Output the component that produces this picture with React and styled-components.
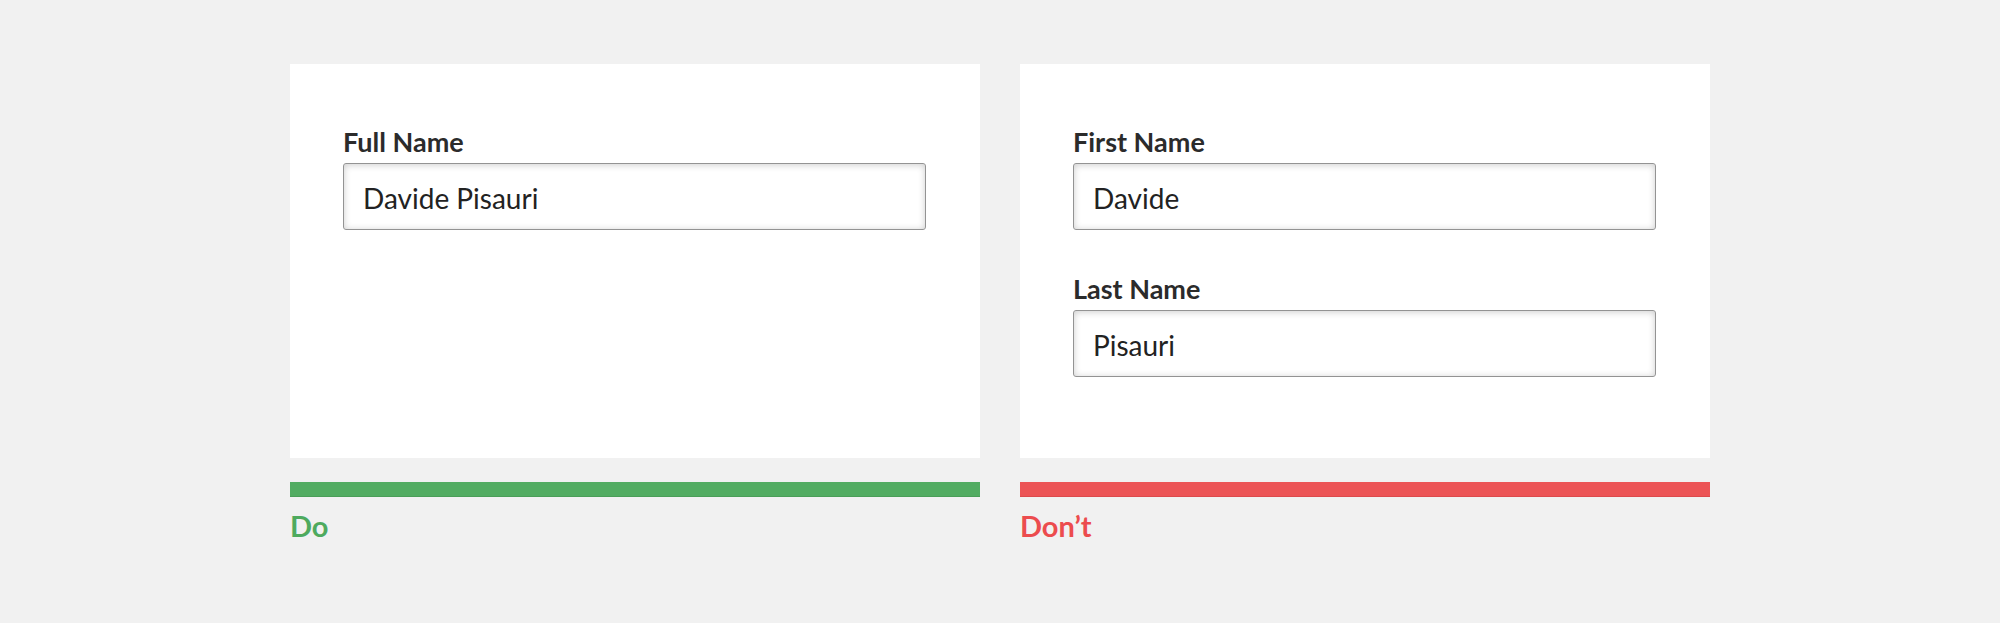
import React from 'react';
import styled, {createGlobalStyle} from "styled-components";

const GlobalStyle = createGlobalStyle`
  html, body {
    margin: 0;
    padding: 0;
    background: #F1F1F1;
    font-family: Lato, "Open Sans", sans-serif;
  }
`

const Page = styled.div`
  min-height: 623px;
  padding-top: 64px;
  box-sizing: border-box;
`

const Columns = styled.div`
  width: 1420px;
  margin: 0 auto;
  display: grid;
  grid-template-columns: 1fr 1fr;
  gap: 40px;
`

const Column = styled.div`
  display: flex;
  flex-direction: column;
`

const Card = styled.div`
  height: 394px;
  box-sizing: border-box;
  background: #FFFFFF;
  padding: 64px 54px 0 53px;
  display: flex;
  flex-direction: column;
  gap: 45px;
`

const Field = styled.label`
  display: flex;
  flex-direction: column;
  gap: 8px;
`

const FieldLabel = styled.span`
  font-size: 27px;
  line-height: 27px;
  font-weight: 700;
  color: #2B2B2B;
`

const TextInput = styled.input`
  height: 67px;
  box-sizing: border-box;
  border: 1px solid #939393;
  border-radius: 3px;
  padding: 2px 19px 0;
  font-family: Lato, "Open Sans", sans-serif;
  font-size: 28px;
  color: #222222;
  background: #FFFFFF;
  box-shadow: inset 0 1px 7px rgba(0, 0, 0, 0.2);
  outline: none;
`

const Verdict = styled.div`
  margin-top: 24px;
  height: 15px;
  box-sizing: border-box;
  background: ${props => props.$color};
  border-bottom: 1px solid ${props => props.$edge};
`

const VerdictText = styled.div`
  margin-top: 14px;
  font-size: 29px;
  line-height: 29px;
  font-weight: 700;
  color: ${props => props.$color};
`

const GREEN = {fill: "#52AC62", edge: "#4A9E58", text: "#4EAA5E"};
const RED = {fill: "#EC5456", edge: "#DC4A4C", text: "#EC4C4E"};

function Example({palette, caption, fields}) {
  return (
    <Column>
      <Card>
        {fields.map(f => (
          <Field key={f.label}>
            <FieldLabel>{f.label}</FieldLabel>
            <TextInput type="text" defaultValue={f.value} readOnly/>
          </Field>
        ))}
      </Card>
      <Verdict $color={palette.fill} $edge={palette.edge}/>
      <VerdictText $color={palette.text}>{caption}</VerdictText>
    </Column>
  );
}

function App() {
  return (
    <Page>
      <GlobalStyle/>
      <Columns>
        <Example
          palette={GREEN}
          caption="Do"
          fields={[{label: "Full Name", value: "Davide Pisauri"}]}
        />
        <Example
          palette={RED}
          caption="Don’t"
          fields={[
            {label: "First Name", value: "Davide"},
            {label: "Last Name", value: "Pisauri"}
          ]}
        />
      </Columns>
    </Page>
  );
}

export default App;
